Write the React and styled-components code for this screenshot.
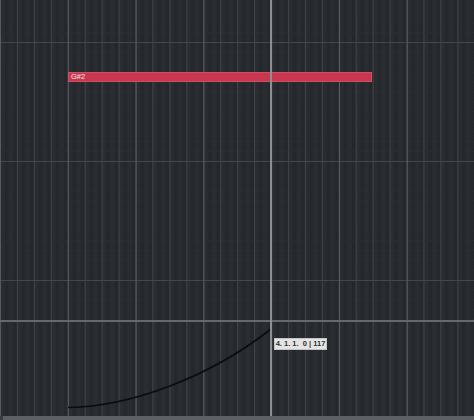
import styled, { createGlobalStyle } from 'styled-components'

const BAR = 67.8
const BEAT = BAR / 4
const LANE = 119 / 12

const GlobalStyle = createGlobalStyle`
  html, body {
    margin: 0;
    padding: 0;
    background: #24272b;
    overflow: hidden;
  }
  * {
    box-sizing: border-box;
  }
`

const verticalGrid = `
  linear-gradient(to right, #575b60 0, #575b60 1px, transparent 1px),
  linear-gradient(to right, #414449 0, #414449 1px, transparent 1px),
  linear-gradient(to right, rgba(255,255,255,0.022) 0, rgba(255,255,255,0.022) ${BEAT / 4}px, transparent ${BEAT / 4}px)
`

const Editor = styled.div`
  position: relative;
  width: 474px;
  height: 420px;
  display: flex;
  flex-direction: column;
  font-family: 'Liberation Sans', Arial, sans-serif;
  overflow: hidden;
`

const NoteGrid = styled.div`
  position: relative;
  height: 320px;
  background-color: #24272b;
  background-image:
    linear-gradient(to right, #575b60 0, #575b60 1px, transparent 1px),
    linear-gradient(to bottom, #43474c 0, #43474c 1px, transparent 1px),
    linear-gradient(to right, #414449 0, #414449 1px, transparent 1px),
    linear-gradient(to bottom, #292c31 0, #292c31 1px, transparent 1px),
    linear-gradient(to right, rgba(255,255,255,0.022) 0, rgba(255,255,255,0.022) ${BEAT / 4}px, transparent ${BEAT / 4}px);
  background-size:
    ${BAR}px 100%,
    100% 119px,
    ${BEAT}px 100%,
    100% ${LANE}px,
    ${BEAT / 2}px 100%;
  background-position:
    0 0,
    0 42px,
    0 0,
    0 ${42 % LANE}px,
    0 0;
`

const Divider = styled.div`
  height: 2px;
  background: #65686c;
  flex-shrink: 0;
`

const AutomationLane = styled.div`
  position: relative;
  flex: 1;
  background-color: #25282c;
  background-image: ${verticalGrid};
  background-size: ${BAR}px 100%, ${BEAT}px 100%, ${BEAT / 2}px 100%;
`

const Scrollbar = styled.div`
  height: 4px;
  flex-shrink: 0;
  background: #5d6064;
  border-left: 3px solid #3a3d41;
`

const Note = styled.div`
  position: absolute;
  left: ${p => p.$x}px;
  top: ${p => p.$y}px;
  width: ${p => p.$w}px;
  height: ${LANE}px;
  background: #c7374f;
  border: 1px solid #d24d63;
  color: #f6e9ec;
  font-size: 7.5px;
  line-height: 8px;
  padding-left: 2px;
  white-space: nowrap;
`

const Playhead = styled.div`
  position: absolute;
  top: 0;
  bottom: 4px;
  left: ${p => p.$x}px;
  width: 2px;
  background: #8c8f93;
  pointer-events: none;
`

const Curve = styled.svg`
  position: absolute;
  left: 0;
  top: 0;
  width: 100%;
  height: 100%;
`

const Tooltip = styled.div`
  position: absolute;
  left: 274px;
  top: 16px;
  width: 53px;
  height: 12px;
  background: #e4e4e4;
  border: 1px solid #c4c4c4;
  color: #333;
  font-size: 7.5px;
  font-weight: bold;
  line-height: 10px;
  text-align: center;
  white-space: pre;
`

export default function App() {
  return (
    <>
      <GlobalStyle />
      <Editor>
        <NoteGrid>
          <Note $x={68} $y={72} $w={304}>G#2</Note>
        </NoteGrid>
        <Divider />
        <AutomationLane>
          <Curve viewBox="0 0 474 94" preserveAspectRatio="none">
            <path
              d="M68 85.5 C 130 85, 210 55, 271 7"
              fill="none"
              stroke="#0b0c0d"
              strokeWidth="1.6"
            />
          </Curve>
          <Tooltip>{'4. 1. 1.  0 | 117'}</Tooltip>
        </AutomationLane>
        <Scrollbar />
        <Playhead $x={270} />
      </Editor>
    </>
  )
}
